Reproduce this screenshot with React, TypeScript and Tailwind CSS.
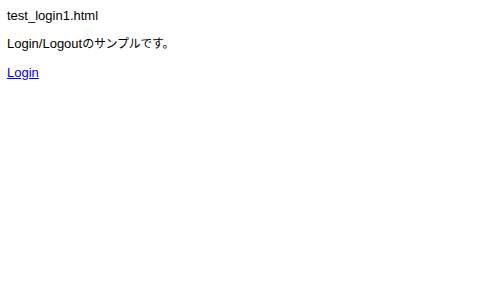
export default function App() {
  return (
    <div className="min-h-screen bg-white py-2 pl-[7px] pr-2 text-[13px] leading-[15px] text-black font-['Liberation_Sans','Noto_Sans_CJK_JP',sans-serif]">
      <div>test_login1.html</div>
      <p className="mt-[13px]">
        Login/Logout<span className="text-[12px] tracking-[-0.3px]">のサンプルです。</span>
      </p>
      <p className="mt-[13px]">
        <a href="#" className="text-[#0000ee] underline">
          Login
        </a>
      </p>
    </div>
  );
}
